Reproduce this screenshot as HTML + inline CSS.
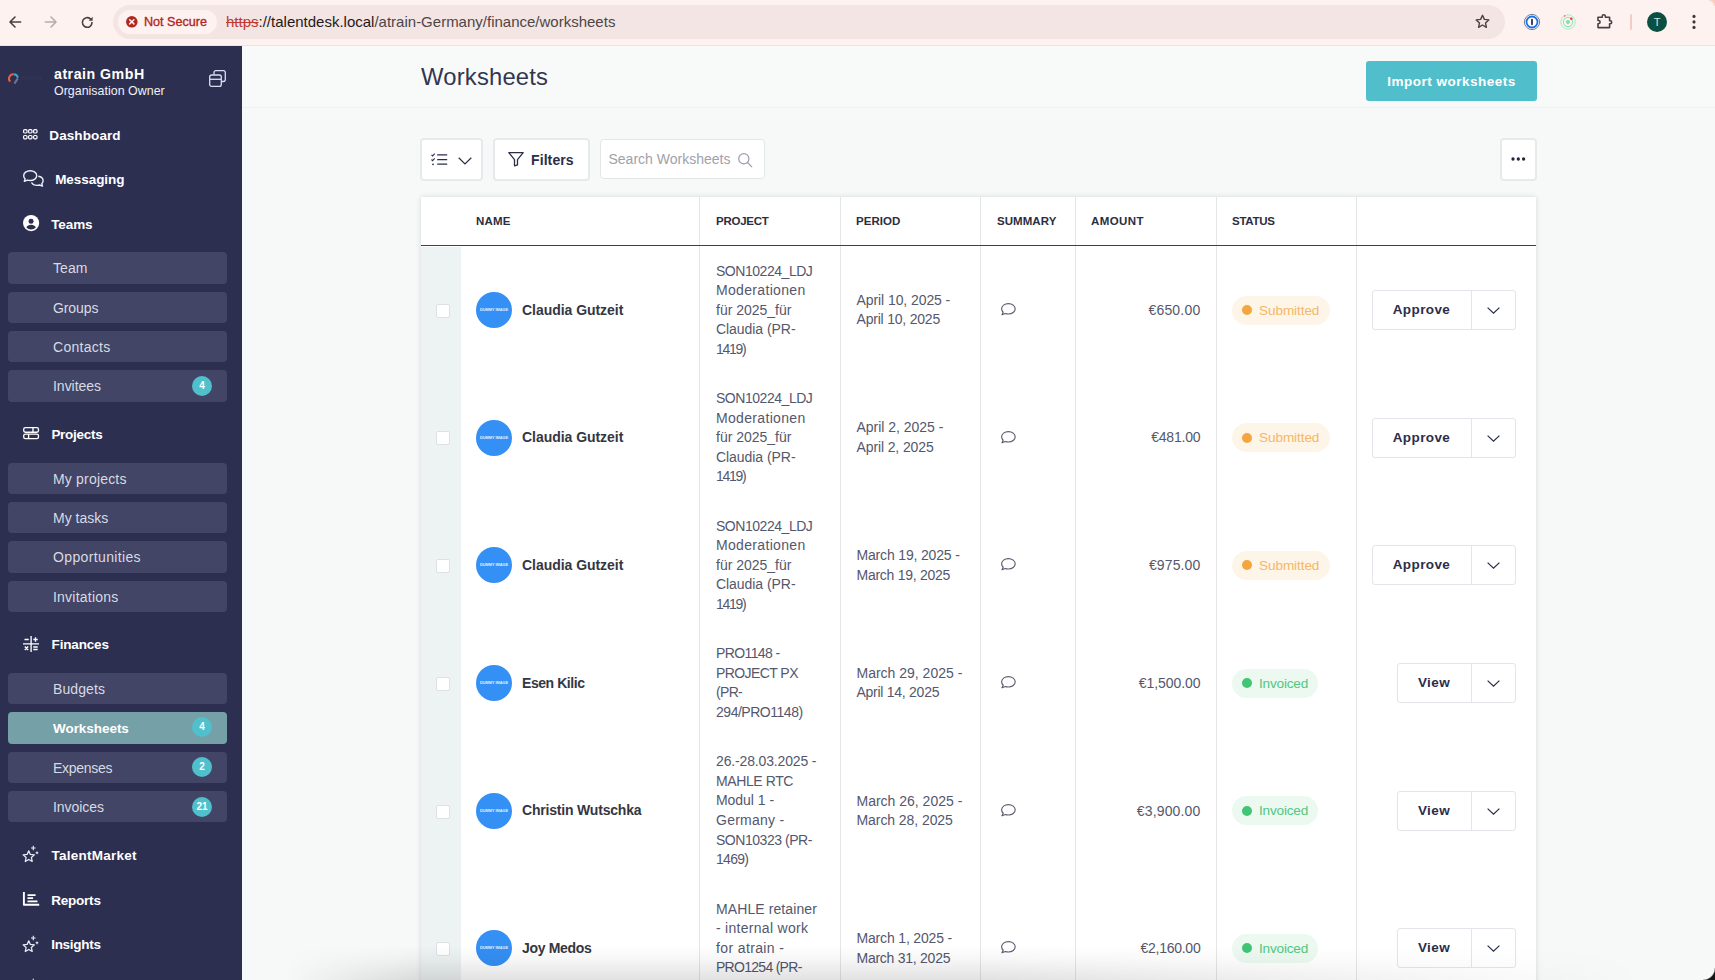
<!DOCTYPE html>
<html lang="en">
<head>
<meta charset="utf-8">
<title>Worksheets</title>
<style>
*{box-sizing:border-box;margin:0;padding:0}
html,body{width:1715px;height:980px;overflow:hidden;background:#f7f8f8;font-family:"Liberation Sans",sans-serif;color:#2b2e4a}
svg{position:absolute;overflow:visible}
/* browser chrome */
#chrome{position:absolute;left:0;top:0;width:1715px;height:46px;background:#fdf2f0}
#chrome:after{content:"";position:absolute;left:0;top:45px;width:1715px;height:1px;background:#efe3e2}
#pill{position:absolute;left:113px;top:5px;width:1392px;height:34px;border-radius:17px;background:#f3e5e3}
#chip{position:absolute;left:118px;top:10px;width:99px;height:24px;border-radius:12px;background:#fdf2f0}
#chip span{position:absolute;left:26px;top:4px;font-size:12.6px;line-height:16px;color:#b3261e;white-space:nowrap;-webkit-text-stroke:.35px #b3261e}
#url{position:absolute;left:226px;top:13px;font-size:15px;line-height:17px;color:#4f4647;white-space:nowrap}
#url s{color:#bf3a30}
#url b{font-weight:400;color:#1f1a1a}
#prof{position:absolute;left:1647px;top:12px;width:20px;height:20px;border-radius:10px;background:#0b4f43;color:#cfe9e3;font-size:11px;line-height:20px;text-align:center}
/* sidebar */
#side{position:absolute;left:0;top:46px;width:242px;height:934px;background:#2c2f50;overflow:hidden}
#org{position:absolute;left:54px;top:18px;font-size:14.2px;line-height:18px;font-weight:700;color:#fff;white-space:nowrap;letter-spacing:.25px}
#role{position:absolute;left:54px;top:36px;font-size:12.4px;line-height:16px;color:#f0f0f6;white-space:nowrap}
#lg{position:absolute;left:21px;top:24px;font-size:7px;color:#30365a;letter-spacing:.3px;font-weight:700}
.nav{position:absolute;height:20px;line-height:20px;font-size:13.5px;font-weight:700;color:#fff;white-space:nowrap}
.sub{position:absolute;left:8px;width:219px;height:31.4px;border-radius:4px;background:#424565;color:#d8dae3;font-size:14px;line-height:32.6px;padding-left:45px;white-space:nowrap}
.sub.act{background:#76a0a7;color:#fff;font-weight:700;font-size:13.5px;line-height:33.6px}
.sub.act .bdg{top:4.6px}
.bdg{letter-spacing:0;position:absolute;left:184px;top:5.5px;width:20px;height:20px;border-radius:10px;background:#4fc0cc;color:#fff;font-size:10px;font-weight:700;line-height:20px;text-align:center}
/* main */
#main{position:absolute;left:242px;top:46px;width:1473px;height:934px;background:#f7f8f8;overflow:hidden}
#hd{position:absolute;left:0;top:0;width:1473px;height:62px;background:#f8fafa;border-bottom:1px solid #eff2f2}
#title{position:absolute;left:421px;top:60.8px;font-size:23.8px;line-height:32px;color:#33364f;white-space:nowrap;letter-spacing:.2px}
#imp{position:absolute;left:1366px;top:61px;width:171px;height:40px;border-radius:3px;background:#50bfcb;color:#fff;font-size:13.5px;font-weight:700;line-height:41.2px;text-align:center;letter-spacing:.5px;white-space:nowrap}
.btn{position:absolute;background:#fff;border:2px solid #e7eaec;border-radius:4px}
#flt{position:absolute;left:36.3px;top:-.4px;font-size:14px;font-weight:700;line-height:40px;color:#2b2e4a;letter-spacing:.1px}
#sph{position:absolute;left:7.7px;top:0;font-size:14px;line-height:38px;color:#a0a2aa;white-space:nowrap}
#tbl{position:absolute;left:421px;top:197px;width:1115px;height:790px;background:#fff;box-shadow:0 0 5px rgba(30,35,40,.15)}
#thb{position:absolute;left:-.5px;top:47.5px;width:1115.5px;height:1.4px;background:#3c3f56}
#cbc{position:absolute;left:0;top:50px;width:40px;height:750px;background:#edf2f3}
.th{position:absolute;top:.6px;height:47px;line-height:47px;font-size:11.5px;font-weight:700;color:#2b2e3f;white-space:nowrap}
.vl{position:absolute;top:0;width:1px;height:800px;background:#e4e7e9}
.cb{position:absolute;left:14.6px;width:14px;height:14px;background:#fff;border:1px solid #dde1e4;border-radius:2px}
.av{position:absolute;left:55px;width:36px;height:36px}
.nm{position:absolute;left:101px;font-size:14px;font-weight:700;color:#343742;white-space:nowrap;line-height:20px;height:20px}
.pj{position:absolute;left:295px;width:130px;font-size:14px;line-height:19.6px;color:#54576d;white-space:nowrap}
.pd{position:absolute;left:435.5px;width:130px;font-size:14px;line-height:19.6px;color:#54576d;white-space:nowrap}
.am{position:absolute;right:335.6px;font-size:14px;line-height:20px;height:20px;color:#54576d;white-space:nowrap}
.st{position:absolute;left:811px;height:29px;border-radius:15px;font-size:13.6px;line-height:29px;padding-left:27px;white-space:nowrap}
.st i{position:absolute;left:10px;top:9.5px;width:10px;height:10px;border-radius:5px}
.st.su{width:98px;background:#fef5e9;color:#f5b767;letter-spacing:-.1px}.st.su i{background:#f4a53f}
.st.iv{width:86px;background:#ebf9f0;color:#55c681;letter-spacing:-.2px}.st.iv i{background:#41c574}
.ab{position:absolute;height:40px;background:#fff;border:1px solid #e2e5e9;border-radius:3px;font-size:13.5px;font-weight:700;color:#2b2e4a;line-height:38px;letter-spacing:.4px}
.ab u{position:absolute;top:0;right:43px;width:1px;height:38px;background:#e2e5e9}
.ab span{position:absolute;left:0;right:45px;text-align:center;white-space:nowrap}
#crn{position:absolute;left:1703px;top:968px;width:12px;height:12px;background:radial-gradient(circle at 0 0,rgba(20,20,20,0) 11.2px,#151515 12.6px)}
#crt{position:absolute;left:1709px;top:0;width:6px;height:6px;background:radial-gradient(circle at 0 100%,rgba(248,205,192,0) 4px,#f8cdc0 6.5px)}
#fade{position:absolute;left:242px;top:946px;width:1430px;height:34px;background:linear-gradient(to bottom,rgba(0,0,0,0),rgba(0,0,0,.035) 40%,rgba(0,0,0,.115));-webkit-mask-image:linear-gradient(to right,transparent 3%,#000 12%,#000 52%,transparent 98%);mask-image:linear-gradient(to right,transparent 3%,#000 12%,#000 52%,transparent 98%);pointer-events:none}
</style>
</head>
<body>
<div id="main">
<div id="hd"></div>
</div>
<div id="title">Worksheets</div>
<div id="imp">Import worksheets</div>
<div class="btn" style="left:420.3px;top:138px;width:63.2px;height:42.8px"><svg style="left:9px;top:12.5px" width="17" height="13" viewBox="0 0 17 13" ><path d="M6.200 1.800h10M6.200 6.500h10M6.200 11.200h10" stroke="#2b2e4a" stroke-width="1.250"/><path d="M.5 1.800l1.100 1.100L3.700.6M.5 6.500l1.100 1.100 2.100-2.300" fill="none" stroke="#2b2e4a" stroke-width="1.100"/><circle cx="2" cy="11.300" r=".9" fill="#2b2e4a"/></svg><svg style="left:36px;top:17px" width="14" height="8" viewBox="0 0 14 8" ><path d="M.7.7l6.300 6.200L13.300.7" fill="none" stroke="#2b2e4a" stroke-width="1.250"/></svg></div>
<div class="btn" style="left:492.7px;top:138px;width:97.2px;height:42.8px"><svg style="left:13.8px;top:11.7px" width="16" height="14.5" viewBox="0 0 16 14.5" ><path d="M.8.700h14.400L9.500 7.600v5.300l-3 1V7.600z" fill="none" stroke="#2b2e4a" stroke-width="1.300" stroke-linejoin="round"/></svg><div id="flt">Filters</div></div>
<div class="btn" style="left:599.8px;top:139.2px;width:165.2px;height:40px;border:1.3px solid #e3e6e9"><div id="sph">Search Worksheets</div><svg style="left:137.4px;top:12.4px" width="15" height="15" viewBox="0 0 15 15" ><circle cx="5.800" cy="5.800" r="5.100" fill="none" stroke="#9b9ea9" stroke-width="1.200"/><path d="M9.500 9.500l4.600 4.600" stroke="#9b9ea9" stroke-width="1.200"/></svg></div>
<div class="btn" style="left:1500px;top:138px;width:37px;height:42.8px"><svg style="left:8.8px;top:17.4px" width="16" height="4" viewBox="0 0 16 4" ><circle cx="2" cy="2" r="1.650" fill="#23253a"/><circle cx="7.300" cy="2" r="1.650" fill="#23253a"/><circle cx="12.600" cy="2" r="1.650" fill="#23253a"/></svg></div>
<div id="tbl">
<div id="cbc"></div>
<div class="vl" style="left:277.8px"></div>
<div class="vl" style="left:418.8px"></div>
<div class="vl" style="left:558.8px"></div>
<div class="vl" style="left:653.8px"></div>
<div class="vl" style="left:794.8px"></div>
<div class="vl" style="left:934.8px"></div>
<div id="thb"></div>
<div class="th" style="left:55px;letter-spacing:0.156px">NAME</div>
<div class="th" style="left:295px;letter-spacing:-0.247px">PROJECT</div>
<div class="th" style="left:435px;letter-spacing:0.034px">PERIOD</div>
<div class="th" style="left:576px;letter-spacing:0.057px">SUMMARY</div>
<div class="th" style="left:670px;letter-spacing:0.389px">AMOUNT</div>
<div class="th" style="left:811px;letter-spacing:-0.283px">STATUS</div>
<div class="cb" style="top:106.9px"></div>
<svg class="av" style="top:95.1px" width="36" height="36" viewBox="0 0 36 36"><circle cx="18" cy="18" r="18" fill="#3490f5"/><text x="18" y="19.2" text-anchor="middle" font-family="Liberation Sans, sans-serif" font-weight="700" font-size="3.850" fill="#e3f0fe">DUMMY IMAGE</text></svg>
<div class="nm" style="top:102.8px"><span style="letter-spacing:-0.04px">Claudia Gutzeit</span></div>
<div class="pj" style="top:64.5px"><span style="letter-spacing:-0.463px">SON10224_LDJ</span><br><span style="letter-spacing:0.331px">Moderationen</span><br><span style="letter-spacing:-0.008px">für 2025_für</span><br><span style="letter-spacing:-0.053px">Claudia (PR-</span><br><span style="letter-spacing:-1.3px">1419)</span></div>
<div class="pd" style="top:93.9px"><span style="letter-spacing:-0.078px">April 10, 2025 -</span><br><span style="letter-spacing:-0.208px">April 10, 2025</span></div>
<svg style="left:580px;top:106.3px" width="15" height="12.500" viewBox="0 0 15 12.500"><path d="M7.400.600C3.600.600.600 2.900.600 5.800c0 1.300.600 2.500 1.600 3.400L1 11.800l3.300-1.300c.95.350 2 .5 3.100.5 3.800 0 6.800-2.300 6.800-5.200S11.200.600 7.400.600z" fill="none" stroke="#595c72" stroke-width="1.150" stroke-linejoin="round"/></svg>
<div class="am" style="top:102.9px"><span style="letter-spacing:0.199px">€650.00</span></div>
<div class="st su" style="top:98.7px"><i></i>Submitted</div>
<div class="ab" style="left:951px;top:93.1px;width:144px"><span>Approve</span><u></u><svg style="left:113.800px;top:16.300px" width="13" height="7" viewBox="0 0 13 7"><path d="M.600.600l5.900 5.600L12.400.600" fill="none" stroke="#2b2e4a" stroke-width="1.250"/></svg></div>
<div class="cb" style="top:234.4px"></div>
<svg class="av" style="top:222.6px" width="36" height="36" viewBox="0 0 36 36"><circle cx="18" cy="18" r="18" fill="#3490f5"/><text x="18" y="19.2" text-anchor="middle" font-family="Liberation Sans, sans-serif" font-weight="700" font-size="3.850" fill="#e3f0fe">DUMMY IMAGE</text></svg>
<div class="nm" style="top:230.3px"><span style="letter-spacing:-0.04px">Claudia Gutzeit</span></div>
<div class="pj" style="top:192.0px"><span style="letter-spacing:-0.463px">SON10224_LDJ</span><br><span style="letter-spacing:0.331px">Moderationen</span><br><span style="letter-spacing:-0.008px">für 2025_für</span><br><span style="letter-spacing:-0.053px">Claudia (PR-</span><br><span style="letter-spacing:-1.3px">1419)</span></div>
<div class="pd" style="top:221.4px"><span style="letter-spacing:-0.018px">April 2, 2025 -</span><br><span style="letter-spacing:-0.116px">April 2, 2025</span></div>
<svg style="left:580px;top:233.8px" width="15" height="12.500" viewBox="0 0 15 12.500"><path d="M7.400.600C3.600.600.600 2.900.600 5.800c0 1.300.600 2.500 1.600 3.400L1 11.800l3.300-1.300c.95.350 2 .5 3.100.5 3.800 0 6.800-2.300 6.800-5.200S11.200.600 7.400.600z" fill="none" stroke="#595c72" stroke-width="1.150" stroke-linejoin="round"/></svg>
<div class="am" style="top:230.4px"><span style="letter-spacing:-0.201px">€481.00</span></div>
<div class="st su" style="top:226.2px"><i></i>Submitted</div>
<div class="ab" style="left:951px;top:220.6px;width:144px"><span>Approve</span><u></u><svg style="left:113.800px;top:16.300px" width="13" height="7" viewBox="0 0 13 7"><path d="M.600.600l5.900 5.600L12.400.600" fill="none" stroke="#2b2e4a" stroke-width="1.250"/></svg></div>
<div class="cb" style="top:362.0px"></div>
<svg class="av" style="top:350.2px" width="36" height="36" viewBox="0 0 36 36"><circle cx="18" cy="18" r="18" fill="#3490f5"/><text x="18" y="19.2" text-anchor="middle" font-family="Liberation Sans, sans-serif" font-weight="700" font-size="3.850" fill="#e3f0fe">DUMMY IMAGE</text></svg>
<div class="nm" style="top:357.9px"><span style="letter-spacing:-0.04px">Claudia Gutzeit</span></div>
<div class="pj" style="top:319.6px"><span style="letter-spacing:-0.463px">SON10224_LDJ</span><br><span style="letter-spacing:0.331px">Moderationen</span><br><span style="letter-spacing:-0.008px">für 2025_für</span><br><span style="letter-spacing:-0.053px">Claudia (PR-</span><br><span style="letter-spacing:-1.3px">1419)</span></div>
<div class="pd" style="top:349.0px"><span style="letter-spacing:-0.165px">March 19, 2025 -</span><br><span style="letter-spacing:-0.264px">March 19, 2025</span></div>
<svg style="left:580px;top:361.4px" width="15" height="12.500" viewBox="0 0 15 12.500"><path d="M7.400.600C3.600.600.600 2.900.600 5.800c0 1.300.600 2.500 1.600 3.400L1 11.800l3.300-1.300c.95.350 2 .5 3.100.5 3.800 0 6.800-2.300 6.800-5.200S11.200.600 7.400.600z" fill="none" stroke="#595c72" stroke-width="1.150" stroke-linejoin="round"/></svg>
<div class="am" style="top:358.0px"><span style="letter-spacing:0.127px">€975.00</span></div>
<div class="st su" style="top:353.8px"><i></i>Submitted</div>
<div class="ab" style="left:951px;top:348.2px;width:144px"><span>Approve</span><u></u><svg style="left:113.800px;top:16.300px" width="13" height="7" viewBox="0 0 13 7"><path d="M.600.600l5.900 5.600L12.400.600" fill="none" stroke="#2b2e4a" stroke-width="1.250"/></svg></div>
<div class="cb" style="top:479.8px"></div>
<svg class="av" style="top:468.0px" width="36" height="36" viewBox="0 0 36 36"><circle cx="18" cy="18" r="18" fill="#3490f5"/><text x="18" y="19.2" text-anchor="middle" font-family="Liberation Sans, sans-serif" font-weight="700" font-size="3.850" fill="#e3f0fe">DUMMY IMAGE</text></svg>
<div class="nm" style="top:475.7px"><span style="letter-spacing:-0.442px">Esen Kilic</span></div>
<div class="pj" style="top:447.2px"><span style="letter-spacing:-0.6px">PRO1148 -</span><br><span style="letter-spacing:-0.576px">PROJECT PX</span><br><span style="letter-spacing:-0.67px">(PR-</span><br><span style="letter-spacing:-0.472px">294/PRO1148)</span></div>
<div class="pd" style="top:466.8px"><span style="letter-spacing:-0.003px">March 29, 2025 -</span><br><span style="letter-spacing:-0.265px">April 14, 2025</span></div>
<svg style="left:580px;top:479.2px" width="15" height="12.500" viewBox="0 0 15 12.500"><path d="M7.400.600C3.600.600.600 2.900.600 5.800c0 1.300.600 2.500 1.600 3.400L1 11.800l3.300-1.300c.95.350 2 .5 3.100.5 3.800 0 6.800-2.300 6.800-5.200S11.200.600 7.400.600z" fill="none" stroke="#595c72" stroke-width="1.150" stroke-linejoin="round"/></svg>
<div class="am" style="top:475.8px"><span style="letter-spacing:-0.066px">€1,500.00</span></div>
<div class="st iv" style="top:471.6px"><i></i>Invoiced</div>
<div class="ab" style="left:976px;top:466.0px;width:119px"><span>View</span><u></u><svg style="left:88.800px;top:16.300px" width="13" height="7" viewBox="0 0 13 7"><path d="M.600.600l5.900 5.600L12.400.600" fill="none" stroke="#2b2e4a" stroke-width="1.250"/></svg></div>
<div class="cb" style="top:607.5px"></div>
<svg class="av" style="top:595.7px" width="36" height="36" viewBox="0 0 36 36"><circle cx="18" cy="18" r="18" fill="#3490f5"/><text x="18" y="19.2" text-anchor="middle" font-family="Liberation Sans, sans-serif" font-weight="700" font-size="3.850" fill="#e3f0fe">DUMMY IMAGE</text></svg>
<div class="nm" style="top:603.4px"><span style="letter-spacing:-0.192px">Christin Wutschka</span></div>
<div class="pj" style="top:555.3px"><span style="letter-spacing:-0.153px">26.-28.03.2025 -</span><br><span style="letter-spacing:-0.395px">MAHLE RTC</span><br><span style="letter-spacing:-0.04px">Modul 1 -</span><br><span style="letter-spacing:0.242px">Germany -</span><br><span style="letter-spacing:-0.464px">SON10323 (PR-</span><br><span style="letter-spacing:-0.703px">1469)</span></div>
<div class="pd" style="top:594.5px"><span style="letter-spacing:-0.003px">March 26, 2025 -</span><br><span style="letter-spacing:-0.071px">March 28, 2025</span></div>
<svg style="left:580px;top:606.9px" width="15" height="12.500" viewBox="0 0 15 12.500"><path d="M7.400.600C3.600.600.600 2.900.600 5.800c0 1.300.600 2.500 1.600 3.400L1 11.800l3.300-1.300c.95.350 2 .5 3.100.5 3.800 0 6.800-2.300 6.800-5.200S11.200.600 7.400.600z" fill="none" stroke="#595c72" stroke-width="1.150" stroke-linejoin="round"/></svg>
<div class="am" style="top:603.5px"><span style="letter-spacing:0.145px">€3,900.00</span></div>
<div class="st iv" style="top:599.3px"><i></i>Invoiced</div>
<div class="ab" style="left:976px;top:593.7px;width:119px"><span>View</span><u></u><svg style="left:88.800px;top:16.300px" width="13" height="7" viewBox="0 0 13 7"><path d="M.600.600l5.900 5.600L12.400.600" fill="none" stroke="#2b2e4a" stroke-width="1.250"/></svg></div>
<div class="cb" style="top:745.0px"></div>
<svg class="av" style="top:733.2px" width="36" height="36" viewBox="0 0 36 36"><circle cx="18" cy="18" r="18" fill="#3490f5"/><text x="18" y="19.2" text-anchor="middle" font-family="Liberation Sans, sans-serif" font-weight="700" font-size="3.850" fill="#e3f0fe">DUMMY IMAGE</text></svg>
<div class="nm" style="top:740.9px"><span style="letter-spacing:-0.329px">Joy Medos</span></div>
<div class="pj" style="top:702.6px"><span style="letter-spacing:0.1px">MAHLE retainer</span><br><span style="letter-spacing:0.285px">- internal work</span><br><span style="letter-spacing:0.374px">for atrain -</span><br><span style="letter-spacing:-0.713px">PRO1254 (PR-</span><br>&nbsp;</div>
<div class="pd" style="top:732.0px"><span style="letter-spacing:-0.171px">March 1, 2025 -</span><br><span style="letter-spacing:-0.257px">March 31, 2025</span></div>
<svg style="left:580px;top:744.4px" width="15" height="12.500" viewBox="0 0 15 12.500"><path d="M7.400.600C3.600.600.600 2.900.600 5.800c0 1.300.600 2.500 1.600 3.400L1 11.800l3.300-1.300c.95.350 2 .5 3.100.5 3.800 0 6.800-2.300 6.800-5.200S11.200.600 7.400.600z" fill="none" stroke="#595c72" stroke-width="1.150" stroke-linejoin="round"/></svg>
<div class="am" style="top:741.0px"><span style="letter-spacing:-0.266px">€2,160.00</span></div>
<div class="st iv" style="top:736.8px"><i></i>Invoiced</div>
<div class="ab" style="left:976px;top:731.2px;width:119px"><span>View</span><u></u><svg style="left:88.800px;top:16.300px" width="13" height="7" viewBox="0 0 13 7"><path d="M.600.600l5.900 5.600L12.400.600" fill="none" stroke="#2b2e4a" stroke-width="1.250"/></svg></div>
</div>
<div id="side">
<svg style="left:7.5px;top:27px" width="11" height="11.5" viewBox="0 0 11 11.5" ><path d="M5.5 1.2A4.4 4.4 0 0 0 2.2 8.6" fill="none" stroke="#e2604a" stroke-width="2"/><path d="M5.5 1.2a4.4 4.4 0 0 1 4.3 3.6" fill="none" stroke="#4aa3c4" stroke-width="2"/><path d="M9.8 5.4L6.4 10.6" fill="none" stroke="#6d7590" stroke-width="2"/></svg>
<div id="lg" style="top:28px">atrain</div>
<div id="org" style="top:18.700000000000003px;letter-spacing:.5px">atrain GmbH</div>
<div id="role" style="top:36.599999999999994px;letter-spacing:.03px">Organisation Owner</div>
<svg style="left:208.5px;top:24px" width="17" height="17" viewBox="0 0 17 17" ><path d="M5 4.6V2.6A1.9 1.9 0 0 1 6.9.7h7.5a1.9 1.9 0 0 1 1.9 1.9v7a1.9 1.9 0 0 1-1.9 1.9h-2" fill="none" stroke="#dcdcf2" stroke-width="1.3"/><rect x=".7" y="5" width="11.6" height="11.3" rx="1.9" fill="none" stroke="#dcdcf2" stroke-width="1.3"/><path d="M.7 9.3h11.6" stroke="#dcdcf2" stroke-width="1.3"/></svg>
<svg style="left:22.5px;top:83.30000000000001px" width="15" height="10.5" viewBox="0 0 15 10.5" ><rect x="0.60" y="0.60" width="3.400" height="3.400" rx="1.100" fill="none" stroke="#fff" stroke-width="1.2"/><rect x="5.60" y="0.60" width="3.400" height="3.400" rx="1.100" fill="none" stroke="#fff" stroke-width="1.2"/><rect x="10.60" y="0.60" width="3.400" height="3.400" rx="1.100" fill="none" stroke="#fff" stroke-width="1.2"/><rect x="0.60" y="6.50" width="3.400" height="3.400" rx="1.100" fill="none" stroke="#fff" stroke-width="1.2"/><rect x="5.60" y="6.50" width="3.400" height="3.400" rx="1.100" fill="none" stroke="#fff" stroke-width="1.2"/><rect x="10.60" y="6.50" width="3.400" height="3.400" rx="1.100" fill="none" stroke="#fff" stroke-width="1.2"/></svg>
<div class="nav" style="left:49.3px;top:79.99999999999999px;letter-spacing:0.098px">Dashboard</div>
<svg style="left:22.5px;top:124px" width="21" height="17" viewBox="0 0 21 17" ><path d="M7.2.7C3.6.7.7 2.9.7 5.7c0 1.2.5 2.300 1.400 3.100L1.300 11.300l3.100-1.200c.85.3 1.800.45 2.800.45 3.600 0 6.500-2.200 6.500-4.900S10.800.7 7.200.7z" fill="none" stroke="#efeffa" stroke-width="1.400" stroke-linejoin="round"/><path d="M15.300 6.300c2.700.4 4.800 2.200 4.800 4.500 0 1.100-.5 2.100-1.300 2.900l.7 2.400-2.900-1.100c-.8.250-1.600.4-2.500.4-2.500 0-4.700-1.200-5.600-2.900" fill="none" stroke="#efeffa" stroke-width="1.400" stroke-linejoin="round"/></svg>
<div class="nav" style="left:55.2px;top:124.2px;letter-spacing:-0.065px">Messaging</div>
<svg style="left:22.6px;top:168.7px" width="16.2" height="16.2" viewBox="0 0 16.2 16.2" ><circle cx="8.1" cy="8.1" r="8.1" fill="#fff"/><circle cx="8.1" cy="6.300" r="2.500" fill="#2c2f50"/><path d="M3.400 12.400c.7-1.700 2.500-2.600 4.700-2.600s4 .9 4.700 2.600c-1.200 1.300-2.800 2-4.700 2s-3.500-.7-4.700-2z" fill="#2c2f50"/></svg>
<div class="nav" style="left:51.2px;top:168.8px;letter-spacing:-0.096px">Teams</div>
<svg style="left:22.7px;top:381px" width="16.2" height="12.4" viewBox="0 0 16.2 12.4" ><rect x=".7" y=".7" width="14.800" height="4.600" rx="1.700" fill="none" stroke="#fff" stroke-width="1.350"/><rect x=".7" y="7.100" width="14.800" height="4.600" rx="1.700" fill="none" stroke="#fff" stroke-width="1.350"/><path d="M10 .7v4.600M5.600 7.100v4.600" stroke="#fff" stroke-width="1.350"/></svg>
<div class="nav" style="left:51.4px;top:379.0px;letter-spacing:-0.273px">Projects</div>
<svg style="left:22.8px;top:589.5px" width="16" height="16" viewBox="0 0 16 16" ><path d="M8.100 0v16M0 7.800h16" stroke="#fff" stroke-width="1.350"/><path d="M1.500 3.500h4.200M10.300 3.500h4.400M12.500 1.300v4.400M1.800 10.500l3.400 3.400M5.200 10.500l-3.400 3.400M10.300 11h4.400M10.300 13.500h4.400" stroke="#fff" stroke-width="1.350"/></svg>
<div class="nav" style="left:51.6px;top:589.0999999999999px;letter-spacing:-0.166px">Finances</div>
<svg style="left:23px;top:800.2px" width="16" height="16" viewBox="0 0 16 16" ><path d="M5.75 4.80L7.37 8.48L11.36 8.88L8.37 11.55L9.22 15.47L5.75 13.45L2.28 15.47L3.13 11.55L0.14 8.88L4.13 8.48z" fill="none" stroke="#ececf8" stroke-width="1.25" stroke-linejoin="round"/><path d="M10.3 -.3v4.6M8 2h4.600" stroke="#ececf8" stroke-width="1.150"/><path d="M14 4.900l.6 1.300 1.300.6-1.300.6-.6 1.300-.6-1.300-1.300-.6 1.300-.6z" fill="#ececf8"/></svg>
<div class="nav" style="left:51.4px;top:800.0px;letter-spacing:0.26px">TalentMarket</div>
<svg style="left:22.6px;top:846px" width="16.4" height="13.6" viewBox="0 0 16.4 13.6" ><path d="M.9 0v12.700h15.300" fill="none" stroke="#fff" stroke-width="1.900" stroke-linejoin="round"/><path d="M4.500 3.100h8.100M4.500 6.200h5.600M4.500 9.300h10" stroke="#fff" stroke-width="1.750"/></svg>
<div class="nav" style="left:51.2px;top:844.5999999999999px;letter-spacing:-0.217px">Reports</div>
<svg style="left:23px;top:889.8px" width="16" height="16" viewBox="0 0 16 16" ><path d="M5.75 4.80L7.37 8.48L11.36 8.88L8.37 11.55L9.22 15.47L5.75 13.45L2.28 15.47L3.13 11.55L0.14 8.88L4.13 8.48z" fill="none" stroke="#ececf8" stroke-width="1.25" stroke-linejoin="round"/><path d="M10.3 -.3v4.6M8 2h4.600" stroke="#ececf8" stroke-width="1.150"/><path d="M14 4.900l.6 1.300 1.300.6-1.300.6-.6 1.300-.6-1.300-1.300-.6 1.300-.6z" fill="#ececf8"/></svg>
<div class="nav" style="left:51.2px;top:889.0px;letter-spacing:-0.283px">Insights</div>
<svg style="left:23px;top:932.8px" width="16" height="16" viewBox="0 0 16 16" ><path d="M5.75 4.80L7.37 8.48L11.36 8.88L8.37 11.55L9.22 15.47L5.75 13.45L2.28 15.47L3.13 11.55L0.14 8.88L4.13 8.48z" fill="none" stroke="#ececf8" stroke-width="1.25" stroke-linejoin="round"/><path d="M10.3 -.3v4.6M8 2h4.600" stroke="#ececf8" stroke-width="1.150"/><path d="M14 4.900l.6 1.300 1.300.6-1.300.6-.6 1.300-.6-1.300-1.300-.6 1.300-.6z" fill="#ececf8"/></svg>
<div class="sub" style="top:206.39999999999998px;letter-spacing:0.066px">Team</div>
<div class="sub" style="top:245.7px;letter-spacing:-0.104px">Groups</div>
<div class="sub" style="top:285.0px;letter-spacing:0.269px">Contacts</div>
<div class="sub" style="top:324.3px;letter-spacing:-0.019px">Invitees<span class="bdg">4</span></div>
<div class="sub" style="top:416.7px;letter-spacing:0.184px">My projects</div>
<div class="sub" style="top:456.0px;letter-spacing:0.021px">My tasks</div>
<div class="sub" style="top:495.29999999999995px;letter-spacing:0.363px">Opportunities</div>
<div class="sub" style="top:534.6px;letter-spacing:0.223px">Invitations</div>
<div class="sub" style="top:626.9px;letter-spacing:0.089px">Budgets</div>
<div class="sub act" style="top:666.3px;letter-spacing:-0.048px">Worksheets<span class="bdg">4</span></div>
<div class="sub" style="top:705.7px;letter-spacing:-0.286px">Expenses<span class="bdg">2</span></div>
<div class="sub" style="top:745.1px;letter-spacing:-0.045px">Invoices<span class="bdg">21</span></div>
</div>
<div id="chrome">
<div id="pill"></div>
<div id="chip"><span>Not Secure</span></div>
<svg style="left:9px;top:16px" width="12" height="12" viewBox="0 0 12 12" ><path d="M11.6 6H1.2M6 1L1 6l5 5" fill="none" stroke="#4a4040" stroke-width="1.6" stroke-linecap="round" stroke-linejoin="round"/></svg>
<svg style="left:44.5px;top:16px" width="12" height="12" viewBox="0 0 12 12" ><path d="M.4 6h10.4M6 1l5 5-5 5" fill="none" stroke="#b9adac" stroke-width="1.6" stroke-linecap="round" stroke-linejoin="round"/></svg>
<svg style="left:80.5px;top:15.5px" width="13" height="13" viewBox="0 0 13 13" ><path d="M11 6.5A4.8 4.8 0 1 1 9.4 2.9" fill="none" stroke="#4a4040" stroke-width="1.6" stroke-linecap="round"/><path d="M11.6 .8v4h-4z" fill="#4a4040"/></svg>
<svg style="left:126px;top:16.2px" width="11.6" height="11.6" viewBox="0 0 11.6 11.6" ><circle cx="5.8" cy="5.8" r="5.8" fill="#b3261e"/><path d="M3.7 3.7l4.2 4.2M7.9 3.7L3.7 7.9" stroke="#fdf2f0" stroke-width="1.5" stroke-linecap="round"/></svg>
<div id="url"><s>https</s><b>://talentdesk.local</b>/atrain-Germany/finance/worksheets</div>
<svg style="left:1474.5px;top:13.8px" width="15" height="15" viewBox="0 0 15 15" ><path d="M7.5 1.3l1.9 4.1 4.4.5-3.3 3 .9 4.4-3.9-2.3-3.9 2.3.9-4.4-3.3-3 4.4-.5z" fill="none" stroke="#4a4040" stroke-width="1.4" stroke-linejoin="round"/></svg>
<svg style="left:1523.5px;top:13.7px" width="16" height="16" viewBox="0 0 16 16" ><circle cx="8" cy="8" r="7.600" fill="#fff" stroke="#4d5f80" stroke-width=".8"/><circle cx="8" cy="8" r="5.500" fill="#fff" stroke="#1a6fe6" stroke-width="1.800"/><rect x="7.150" y="4.800" width="1.700" height="6.400" rx=".850" fill="#20233a"/></svg>
<svg style="left:1560px;top:14px" width="16" height="16" viewBox="0 0 16 16" ><circle cx="8" cy="8" r="7.2" fill="none" stroke="#a6edc9" stroke-width="1"/><circle cx="8" cy="8" r="4.6" fill="none" stroke="#8fe6ba" stroke-width="1.1"/><circle cx="8" cy="8" r="2" fill="#7fe0ae"/><circle cx="11.3" cy="4.8" r="1.3" fill="#e8453c"/><circle cx="4.6" cy="1.8" r=".9" fill="#ef7b62"/></svg>
<svg style="left:1596px;top:13px" width="17" height="16" viewBox="0 0 17 16" ><path d="M2 4.2h4.2V3.4a1.6 1.6 0 0 1 3.2 0v.8h4.2v3.6h.6a1.5 1.5 0 0 1 0 3h-.6v3.8H2v-3.9h.5a1.6 1.6 0 0 0 0-3.2H2z" fill="none" stroke="#4a4040" stroke-width="1.6" stroke-linejoin="round"/></svg>
<div style="position:absolute;left:1630px;top:14px;width:1.6px;height:16px;background:#f4ccc3;border-radius:1px"></div>
<div id="prof">T</div>
<svg style="left:1691.5px;top:14px" width="4" height="16" viewBox="0 0 4 16" ><circle cx="2" cy="2.400" r="1.550" fill="#3e3433"/><circle cx="2" cy="7.900" r="1.550" fill="#3e3433"/><circle cx="2" cy="13.400" r="1.550" fill="#3e3433"/></svg>
</div>
<div id="fade"></div><div id="crn"></div><div id="crt"></div>
</body>
</html>
